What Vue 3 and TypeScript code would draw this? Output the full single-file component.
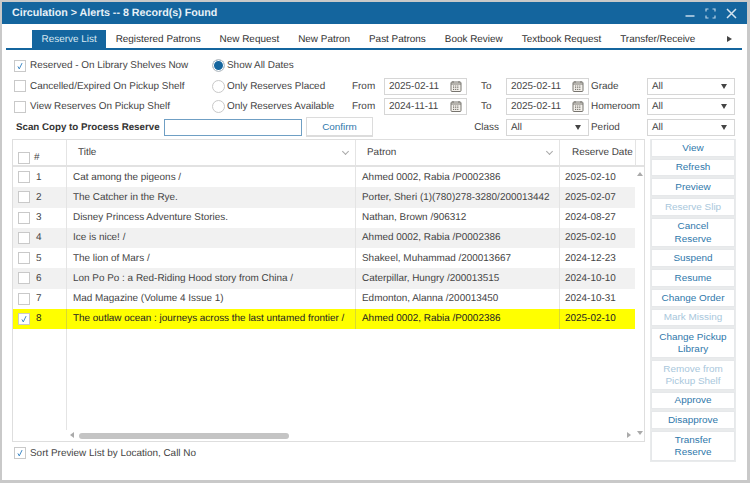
<template>
  <div class="window">
    <div class="title-bar">
      <span class="title">Circulation &gt; Alerts -- 8 Record(s) Found</span>
      <div class="win-icons">
        <svg width="10" height="10" viewBox="0 0 10 10"><path d="M0.5 8h9" stroke="#b9d3e6" stroke-width="1.6" /></svg>
        <svg width="11" height="11" viewBox="0 0 11 11" fill="none" stroke="#b9d3e6" stroke-width="1.2">
          <path d="M1 3.5V1h2.5M7.5 1H10v2.5M10 7.5V10H7.5M3.5 10H1V7.5" />
        </svg>
        <svg width="11" height="11" viewBox="0 0 11 11" fill="none" stroke="#d5e4ef" stroke-width="1.5">
          <path d="M1 1l9 9M10 1l-9 9" />
        </svg>
      </div>
    </div>

    <div class="tabs">
      <div
        v-for="(tab, i) in tabs"
        :key="tab"
        class="tab"
        :class="{ active: i === 0 }"
      >
        {{ tab }}
      </div>
      <span class="tab-more"></span>
    </div>

    <div class="filters">
      <label class="check-line"><span class="box checked"><svg viewBox="0 0 12 12"><path d="M3.5 6.5l1.6 3L8.5 2.5" /></svg></span>Reserved - On Library Shelves Now</label>
      <label class="radio-line"><span class="radio on"></span>Show All Dates</label>
      <span></span><span></span><span></span><span></span><span></span><span></span>

      <label class="check-line"><span class="box"></span>Cancelled/Expired On Pickup Shelf</label>
      <label class="radio-line"><span class="radio"></span>Only Reserves Placed</label>
      <span class="lbl">From</span>
      <div class="field date"><span>2025-02-11</span><svg class="cal" viewBox="0 0 12 12"><use href="#cal" /></svg></div>
      <span class="lbl to">To</span>
      <div class="field date"><span>2025-02-11</span><svg class="cal" viewBox="0 0 12 12"><use href="#cal" /></svg></div>
      <span class="lbl side">Grade</span>
      <div class="field select"><span>All</span><i class="caret"></i></div>

      <label class="check-line"><span class="box"></span>View Reserves On Pickup Shelf</label>
      <label class="radio-line"><span class="radio"></span>Only Reserves Available</label>
      <span class="lbl">From</span>
      <div class="field date"><span>2024-11-11</span><svg class="cal" viewBox="0 0 12 12"><use href="#cal" /></svg></div>
      <span class="lbl to">To</span>
      <div class="field date"><span>2025-02-11</span><svg class="cal" viewBox="0 0 12 12"><use href="#cal" /></svg></div>
      <span class="lbl side">Homeroom</span>
      <div class="field select"><span>All</span><i class="caret"></i></div>

      <div class="scan">
        <b>Scan Copy to Process Reserve</b>
        <input class="scan-input" type="text" />
        <button class="confirm" type="button">Confirm</button>
      </div>
      <span class="lbl class-lbl">Class</span>
      <div class="field select"><span>All</span><i class="caret"></i></div>
      <span class="lbl side">Period</span>
      <div class="field select"><span>All</span><i class="caret"></i></div>
    </div>

    <svg width="0" height="0" class="defs">
      <symbol id="cal" viewBox="0 0 12 12">
        <rect x="1" y="1.5" width="10" height="9.5" rx="1" fill="#f4f1ec" stroke="#77746e" />
        <path d="M1 3.5h10" stroke="#77746e" />
        <path d="M3 0.5v2M9 0.5v2" stroke="#77746e" />
        <path d="M3 5.5h6M3 7.2h6M3 9h6" stroke="#77746e" stroke-dasharray="1.2 .9" />
      </symbol>
    </svg>

    <div class="main">
      <div class="left">
        <div class="grid">
          <div class="grid-body">
            <div class="row head">
              <div class="c-num"><span class="box"></span><span class="hash">#</span></div>
              <div class="c-title">Title<i class="chev"></i></div>
              <div class="c-patron">Patron<i class="chev"></i></div>
              <div class="c-date">Reserve Date</div>
            </div>
            <div
              v-for="r in records"
              :key="r.n"
              class="row"
              :class="{ alt: r.n % 2 === 0, hit: r.n === 8 }"
            >
              <div class="c-num">
                <span class="box" :class="{ checked: r.n === 8 }">
                  <svg v-if="r.n === 8" viewBox="0 0 12 12"><path d="M3.5 6.5l1.6 3L8.5 2.5" /></svg>
                </span>
                <span class="num">{{ r.n }}</span>
              </div>
              <div class="c-title">{{ r.title }}</div>
              <div class="c-patron">{{ r.patron }}</div>
              <div class="c-date">{{ r.date }}</div>
            </div>
            <div class="rest">
              <div class="c-num"></div>
            </div>
            <div class="hscroll">
              <i class="arrow-left"></i>
              <div class="thumb"></div>
              <i class="arrow-right"></i>
            </div>
          </div>
          <div class="vscroll">
            <div class="corner"></div>
            <i class="arrow-up"></i>
            <i class="arrow-down"></i>
          </div>
        </div>
        <label class="check-line sort"><span class="box checked"><svg viewBox="0 0 12 12"><path d="M3.5 6.5l1.6 3L8.5 2.5" /></svg></span>Sort Preview List by Location, Call No</label>
      </div>

      <div class="actions">
        <button
          v-for="a in actions"
          :key="a.label"
          type="button"
          class="action"
          :class="{ off: a.off, tall: a.label.includes('\n') }"
        >
          {{ a.label }}
        </button>
      </div>
    </div>
  </div>
</template>

<script setup lang="ts">
const tabs = [
  'Reserve List',
  'Registered Patrons',
  'New Request',
  'New Patron',
  'Past Patrons',
  'Book Review',
  'Textbook Request',
  'Transfer/Receive',
]

const records = [
  { n: 1, title: 'Cat among the pigeons /', patron: 'Ahmed 0002, Rabia /P0002386', date: '2025-02-10' },
  { n: 2, title: 'The Catcher in the Rye.', patron: 'Porter, Sheri (1)(780)278-3280/200013442', date: '2025-02-07' },
  { n: 3, title: 'Disney Princess Adventure Stories.', patron: 'Nathan, Brown /906312', date: '2024-08-27' },
  { n: 4, title: 'Ice is nice! /', patron: 'Ahmed 0002, Rabia /P0002386', date: '2025-02-10' },
  { n: 5, title: 'The lion of Mars /', patron: 'Shakeel, Muhammad /200013667', date: '2024-12-23' },
  { n: 6, title: 'Lon Po Po : a Red-Riding Hood story from China /', patron: 'Caterpillar, Hungry /200013515', date: '2024-10-10' },
  { n: 7, title: 'Mad Magazine (Volume 4 Issue 1)', patron: 'Edmonton, Alanna /200013450', date: '2024-10-31' },
  { n: 8, title: 'The outlaw ocean : journeys across the last untamed frontier /', patron: 'Ahmed 0002, Rabia /P0002386', date: '2025-02-10' },
]

const actions = [
  { label: 'View' },
  { label: 'Refresh' },
  { label: 'Preview' },
  { label: 'Reserve Slip', off: true },
  { label: 'Cancel\nReserve' },
  { label: 'Suspend' },
  { label: 'Resume' },
  { label: 'Change Order' },
  { label: 'Mark Missing', off: true },
  { label: 'Change Pickup\nLibrary' },
  { label: 'Remove from\nPickup Shelf', off: true },
  { label: 'Approve' },
  { label: 'Disapprove' },
  { label: 'Transfer\nReserve' },
]
</script>

<style scoped>
.window {
  width: 745px;
  height: 478px;
  margin: 2px 0 0 2px;
  background: #fff;
  font-family: 'Liberation Sans', Arial, sans-serif;
  font-size: 9.93px;
  text-rendering: geometricPrecision;
  color: #444;
  box-sizing: border-box;
}

.title-bar {
  height: 22px;
  background: #14659e;
  color: #e8f1f7;
  display: flex;
  align-items: center;
  justify-content: space-between;
  padding: 0 10px;
}

.title {
  font-weight: bold;
  font-size: 10.7px;
}

.win-icons {
  display: flex;
  align-items: center;
  gap: 10px;
}

.win-icons svg {
  display: block;
}

.tabs {
  display: flex;
  height: 18px;
  margin: 6px 5px 0 4px;
  padding-left: 26px;
  border-bottom: 2px solid #14659e;
  position: relative;
  color: #333;
}

.tab {
  padding: 0 9.5px;
  line-height: 19px;
  white-space: nowrap;
}

.tab.active {
  background: #14659e;
  color: #d8e8f2;
}

.tab-more {
  position: absolute;
  right: 10px;
  top: 6px;
  border-left: 5px solid #444;
  border-top: 3px solid transparent;
  border-bottom: 3px solid transparent;
}

.filters {
  display: grid;
  grid-template-columns: 198px 140px 32px 83px 39px 83px 58px 88px;
  grid-auto-rows: 20.5px;
  align-items: center;
  padding: 5.5px 0 0 12px;
}

.check-line,
.radio-line {
  display: flex;
  align-items: center;
  white-space: nowrap;
}

.box {
  flex: none;
  width: 10px;
  height: 10px;
  border: 1px solid #c9c9c9;
  background: #fff;
  margin-right: 4px;
  display: inline-block;
}

.box svg {
  display: block;
  width: 10px;
  height: 10px;
  fill: none;
  stroke: #2f7fc1;
  stroke-width: 1.1;
}

.radio {
  flex: none;
  width: 11px;
  height: 11px;
  border: 1px solid #c9c9c9;
  border-radius: 50%;
  margin-right: 2px;
}

.radio.on {
  background: #14659e;
  box-shadow: inset 0 0 0 1px #fff;
}

.lbl {
  white-space: nowrap;
}

.lbl.to {
  padding-left: 14px;
}

.lbl.side {
  padding-left: 2px;
}

.field {
  height: 17px;
  border: 1px solid #d6d6d6;
  box-sizing: border-box;
  display: flex;
  align-items: center;
  justify-content: space-between;
  padding: 0 4px;
  background: #fff;
}

.cal {
  width: 12px;
  height: 13px;
}

.caret {
  border-top: 5px solid #444;
  border-left: 3px solid transparent;
  border-right: 3px solid transparent;
  margin-right: 3px;
}

.scan {
  grid-column: 1 / 5;
  display: flex;
  align-items: center;
  padding-left: 2px;
  margin-right: -30px;
}

.scan b {
  color: #333;
  font-size: 9.75px;
  white-space: nowrap;
  margin-right: 4px;
  width: 144px;
  flex: none;
}

.scan-input {
  width: 138px;
  height: 17px;
  box-sizing: border-box;
  border: 1px solid #6f9fc4;
  outline: none;
  padding: 0;
  margin: 0;
  flex: none;
}

.confirm {
  width: 67px;
  height: 20px;
  margin-left: 4px;
  flex: none;
  background: #fff;
  border: 1px solid #dcdcdc;
  border-bottom-width: 2px;
  color: #2f78ab;
  font: inherit;
  padding: 0;
}

.class-lbl {
  grid-column: 5 / 6;
  justify-self: end;
  margin-right: 7px;
}

.main {
  display: flex;
  margin-top: 1.5px;
  padding-left: 10px;
}

.left {
  width: 633px;
  flex: none;
}

.grid {
  width: 633px;
  height: 303px;
  border: 1px solid #dedede;
  box-sizing: border-box;
  display: flex;
}

.grid-body {
  width: 622px;
  flex: none;
  display: flex;
  flex-direction: column;
  overflow: hidden;
}

.row,
.rest {
  display: grid;
  grid-template-columns: 54px 289px 204px 75px;
  flex: none;
  height: 20.25px;
  align-items: stretch;
}

.row > div {
  display: flex;
  align-items: center;
  white-space: nowrap;
  overflow: hidden;
  border-right: 1px solid #e4e4e4;
  box-sizing: border-box;
  padding-left: 6px;
}

.row > .c-num {
  padding-left: 5px;
}

.row > .c-date {
  border-right: 0;
  padding-left: 5px;
}

.row.head {
  height: 27px;
  border-bottom: 2px solid #e2e2e2;
  box-sizing: border-box;
}

.row.head > .c-title,
.row.head > .c-patron {
  padding: 0 7px 1px 11px;
  justify-content: space-between;
}

.row.head > .c-date {
  padding: 0 0 1px 12px;
}

.row.head > .c-num {
  padding-top: 10px;
}

.chev {
  width: 4px;
  height: 4px;
  border-right: 1px solid #a9a9a9;
  border-bottom: 1px solid #a9a9a9;
  transform: rotate(45deg);
  margin-top: -2px;
}

.row.alt {
  background: #f1f1f1;
}

.row.hit {
  background: #ffff00;
  color: #222;
}

.row.hit > div {
  border-right-color: #dada30;
}

.row > .c-num .box {
  margin-right: 6px;
}

.row.head > .c-num .box {
  margin-right: 4px;
}

.rest {
  flex: 1;
  height: auto;
  min-height: 0;
}

.rest .c-num {
  border-right: 1px solid #e4e4e4;
}

.hscroll {
  height: 11px;
  flex: none;
  display: flex;
  align-items: center;
  margin-left: 54px;
  position: relative;
  padding-left: 12px;
}

.thumb {
  width: 210px;
  height: 6px;
  border-radius: 3px;
  background: #c4c4c4;
}

.arrow-left {
  position: absolute;
  left: 3px;
  top: 2px;
  border-right: 4px solid #aaa;
  border-top: 3px solid transparent;
  border-bottom: 3px solid transparent;
}

.arrow-right {
  position: absolute;
  right: 4px;
  top: 2px;
  border-left: 4px solid #aaa;
  border-top: 3px solid transparent;
  border-bottom: 3px solid transparent;
}

.vscroll {
  flex: 1;
  display: flex;
  flex-direction: column;
  justify-content: space-between;
  align-items: center;
  padding-bottom: 6px;
}

.corner {
  align-self: stretch;
  height: 27px;
  box-sizing: border-box;
  border-left: 1px solid #e4e4e4;
  border-bottom: 2px solid #e2e2e2;
  margin-bottom: 5px;
}

.arrow-up {
  border-bottom: 4px solid #aaa;
  border-left: 3px solid transparent;
  border-right: 3px solid transparent;
  margin-bottom: auto;
}

.arrow-down {
  border-top: 4px solid #aaa;
  border-left: 3px solid transparent;
  border-right: 3px solid transparent;
}

.sort {
  margin: 5px 0 0 2px;
}

.actions {
  margin: 0 0 0 5px;
  width: 86px;
  height: 323px;
  display: flex;
  flex-direction: column;
  gap: 2px;
  background: #e9ebec;
  padding: 0 1px;
  box-sizing: border-box;
  flex: none;
}

.action {
  flex: none;
  height: 17.7px;
  background: #fff;
  border: 1px solid #e6e8ea;
  color: #2f78ab;
  font: inherit;
  line-height: 12.2px;
  padding: 0;
  white-space: pre-line;
  text-align: center;
}

.action.tall {
  height: 29.7px;
}

.action.off {
  color: #a9c7dc;
}

.defs {
  position: absolute;
}
</style>

<style>
html,
body {
  margin: 0;
  background: #c9c9c9;
  overflow: hidden;
}
</style>
